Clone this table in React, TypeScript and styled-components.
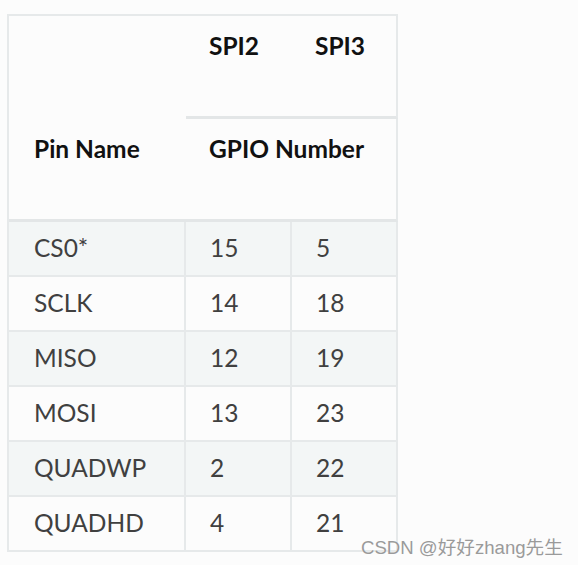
import styled, { createGlobalStyle } from "styled-components";

const GlobalStyle = createGlobalStyle`
  html, body {
    margin: 0;
    padding: 0;
    background: #fcfcfc;
  }
`;

const rows = [
  { pin: "CS0*", spi2: "15", spi3: "5" },
  { pin: "SCLK", spi2: "14", spi3: "18" },
  { pin: "MISO", spi2: "12", spi3: "19" },
  { pin: "MOSI", spi2: "13", spi3: "23" },
  { pin: "QUADWP", spi2: "2", spi3: "22" },
  { pin: "QUADHD", spi2: "4", spi3: "21" },
];

const App = () => {
  return (
    <Page>
      <GlobalStyle />
      <PinTable>
        <HeadCell />
        <HeadCell $line>SPI2</HeadCell>
        <HeadCell $line $edge>
          SPI3
        </HeadCell>
        <HeadCell $line $first>
          Pin Name
        </HeadCell>
        <HeadCell $line $edge $span={2}>
          GPIO Number
        </HeadCell>
        {rows.map((row, i) => (
          <BodyRow key={row.pin} $odd={i % 2 === 0}>
            <Cell $first>{row.pin}</Cell>
            <Cell>{row.spi2}</Cell>
            <Cell>{row.spi3}</Cell>
          </BodyRow>
        ))}
      </PinTable>
      <Watermark>CSDN @好好zhang先生</Watermark>
    </Page>
  );
};

export default App;

const Page = styled.div`
  position: relative;
  width: 578px;
  height: 565px;
  padding: 14px 0 0 7px;
  box-sizing: border-box;
  background: #fcfcfc;
`;

const PinTable = styled.div`
  display: grid;
  grid-template-columns: 177px 106px 106px;
  grid-template-rows: 103px 103px repeat(6, 55px);
  width: max-content;
  border-top: 2px solid #e6e9ea;
  border-left: 2px solid #e6e9ea;
  background: #fcfcfc;
  font-family: Lato, "Open Sans", sans-serif;
  font-size: 24.5px;
  color: #404040;
`;

const HeadCell = styled.div<{
  $line?: boolean;
  $edge?: boolean;
  $first?: boolean;
  $span?: number;
}>`
  grid-column: span ${({ $span }) => $span ?? 1};
  box-sizing: border-box;
  padding: 15px 0 0 ${({ $first }) => ($first ? "25px" : "23px")};
  font-weight: 700;
  color: #111;
  line-height: 29px;
  white-space: nowrap;
  border-right: ${({ $edge }) => ($edge ? "2px solid #e6e9ea" : "0")};
  border-bottom: ${({ $line }) => ($line ? "3px solid #e3e6e7" : "0")};
`;

const BodyRow = styled.div<{ $odd: boolean }>`
  display: contents;
  & > div {
    background: ${({ $odd }) => ($odd ? "#f3f6f6" : "#fcfcfc")};
  }
`;

const Cell = styled.div<{ $first?: boolean }>`
  display: flex;
  align-items: center;
  box-sizing: border-box;
  padding: 0 0 2px ${({ $first }) => ($first ? "25px" : "24px")};
  border-right: 2px solid #e6e9ea;
  border-bottom: 2px solid #e6e9ea;
  line-height: 29px;
`;

const Watermark = styled.div`
  position: absolute;
  left: 361px;
  top: 532px;
  font-family: "Liberation Sans", "Noto Sans CJK SC", sans-serif;
  font-size: 18.6px;
  color: #9a9a9a;
  text-shadow: 0 0 1px #fff;
  white-space: nowrap;
`;
